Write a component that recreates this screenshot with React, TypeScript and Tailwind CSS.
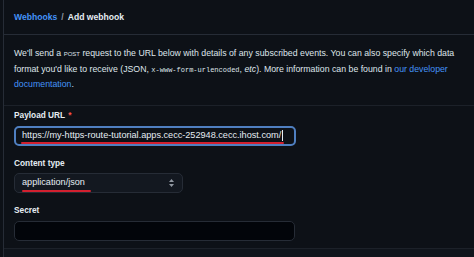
import React from 'react';

const sans = { fontFamily: '"Liberation Sans", Arial, sans-serif' };
const mono = { fontFamily: '"Liberation Mono", "DejaVu Sans Mono", monospace' };

const App = () => {
  return (
    <div className="w-[474px] h-[257px] overflow-hidden bg-[#0d1117] text-[#e6edf3]" style={sans}>
      <div className="ml-[3px] border-l border-[#262c36] h-full flex flex-col">
        <div className="h-[35px] shrink-0 border-b border-[#262c36] flex items-center px-[10px] pt-[1px] text-[8.6px] font-bold">
          <span className="text-[#4493f8]">Webhooks</span>
          <span className="text-[#9198a1] mx-[4px]">/</span>
          <span>Add webhook</span>
        </div>

        <div className="px-[10px] pt-[11px] shrink-0">
          <p className="text-[8.75px] leading-[14.5px] text-[#dfe5eb] whitespace-nowrap">
            We'll send a <span className="uppercase text-[6px]">post</span> request to the URL below with details of any subscribed events. You can also specify which data
            <br />
            format you'd like to receive (JSON, <code className="text-[7px]" style={mono}>x-www-form-urlencoded</code>, <em>etc</em>). More information can be found in <span className="text-[#4493f8]">our developer</span>
            <br />
            <span className="text-[#4493f8]">documentation</span>.
          </p>
        </div>

        <div className="mt-[13px] border-t border-[#1c2129] px-[10px] pt-[3px] flex-1 flex flex-col">
          <label className="text-[8.3px] font-bold h-[13px] flex items-center">
            Payload URL <span className="text-[#f85149] ml-[3px]">*</span>
          </label>
          <div className="mt-[4px] w-[282px] h-[20px] rounded-[5px] border-2 border-[#4f7fc0] bg-[#0d1117] flex items-center px-[6px] relative">
            <span className="text-[9.15px] whitespace-nowrap">https://my-https-route-tutorial.apps.cecc-252948.cecc.ihost.com/</span>
            <span className="w-px h-[11px] bg-[#e6edf3] ml-[1px]" />
            <span className="absolute left-[5px] w-[263px] top-[14px] h-[2px] bg-[#d2202f] rounded-full" />
          </div>

          <label className="mt-[11px] text-[8.3px] font-bold h-[13px] flex items-center">Content type</label>
          <div className="mt-[3px] w-[169px] h-[20px] rounded-[5px] border border-[#262c36] bg-[#131820] flex items-center px-[7px] relative">
            <span className="text-[9.15px] text-[#e6edf3]">application/json</span>
            <svg className="ml-auto mr-[1px]" width="5" height="8" viewBox="0 0 5 8" fill="#9198a1">
              <path d="M2.5 0 L5 3 H0 Z" />
              <path d="M2.5 8 L5 5 H0 Z" />
            </svg>
            <span className="absolute left-[7px] w-[69px] top-[16px] h-[2px] bg-[#d2202f] rounded-full" />
          </div>

          <label className="mt-[11px] text-[8.3px] font-bold h-[13px] flex items-center">Secret</label>
          <div className="mt-[4px] w-[281px] h-[20px] rounded-[5px] border border-[#262c36] bg-[#02050a]" />
        </div>

        <div className="h-[9px] shrink-0 border-t border-[#1c2129] bg-[#10151c]" />
      </div>
    </div>
  );
};

export default App;
